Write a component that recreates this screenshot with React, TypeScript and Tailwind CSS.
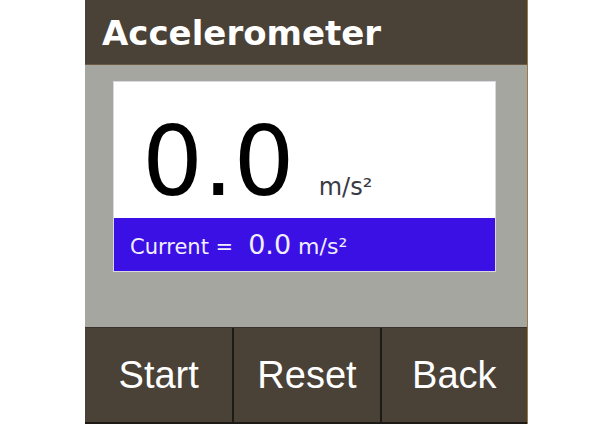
export default function App() {
  const buttons = ["Start", "Reset", "Back"];

  return (
    <div className="w-[615px] h-[424px] bg-white flex">
      <div className="ml-[85px] w-[443px] h-full flex flex-col border-r border-[#9c7a45]">
        {/* title bar */}
        <div className="h-[65px] bg-[#4a4137] border-b border-[#6b5b45] pl-[17px] pt-[16px]">
          <div className="text-[34px] leading-none font-bold text-white font-['DejaVu_Sans',sans-serif]">
            Accelerometer
          </div>
        </div>

        {/* readout */}
        <div className="flex-1 bg-[#a6a6a1] pt-[16px] px-[28px]">
          <div className="w-[383px] bg-white border border-[#d8d8e0]">
            <div className="h-[136px] pt-[32px] pl-[28px] flex items-baseline font-['DejaVu_Sans',sans-serif]">
              <span className="text-[96px] leading-none text-black">0.0</span>
              <span className="ml-[24px] text-[24px] leading-none text-[#3a3a44]">m/s²</span>
            </div>
            <div className="h-[53px] bg-[#3b10e5] pl-[16px] flex items-center font-['DejaVu_Sans',sans-serif] text-[#f0eeff]">
              <div className="flex items-baseline">
                <span className="text-[21px] leading-none">Current =</span>
                <span className="ml-[15px] text-[27px] leading-none">0.0</span>
                <span className="ml-[7px] text-[22px] leading-none">m/s²</span>
              </div>
            </div>
          </div>
        </div>

        {/* buttons */}
        <div className="h-[97px] grid grid-cols-3 bg-[#4a4137] border-t border-[#3a322a] border-b-2 border-b-[#1e1a16]">
          {buttons.map((label, i) => (
            <button
              key={label}
              className={`flex items-center justify-center text-white text-[38px] font-['Liberation_Sans',Arial,sans-serif] ${
                i > 0 ? "border-l-2 border-[#1e1a16]" : ""
              }`}
            >
              {label}
            </button>
          ))}
        </div>
      </div>
    </div>
  );
}
